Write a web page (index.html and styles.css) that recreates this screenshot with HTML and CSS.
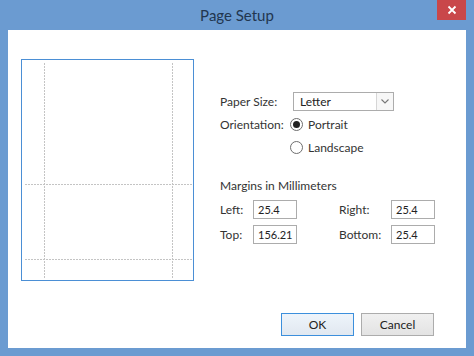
FILE: index.html
```html
<!DOCTYPE html>
<html lang="en">
<head>
    <meta charset="UTF-8">
    <title>Page Setup</title>
    <link rel="stylesheet" href="styles.css">
</head>
<body>
    <div class="window">
        <div class="titlebar">
            <span class="title">Page Setup</span>
            <span class="close-btn">
                <svg width="10" height="10" viewBox="0 0 10 10"><path d="M1.5 1.5 L8.5 8.5 M8.5 1.5 L1.5 8.5" stroke="#fff" stroke-width="1.8"/></svg>
            </span>
        </div>
        <div class="client">
            <div class="main">
                <div class="preview">
                    <svg width="171" height="220" viewBox="0 0 171 220">
                        <g stroke="#c4c4c4" stroke-width="1" stroke-dasharray="2 1">
                            <line x1="22.5" y1="3" x2="22.5" y2="219"/>
                            <line x1="150.5" y1="3" x2="150.5" y2="219"/>
                            <line x1="3" y1="124.5" x2="171" y2="124.5"/>
                            <line x1="3" y1="199.5" x2="171" y2="199.5"/>
                        </g>
                    </svg>
                </div>
                <div class="form">
                    <div class="row">
                        <span class="label">Paper Size:</span>
                        <div class="select">
                            <span class="select-value">Letter</span>
                            <span class="select-arrow">
                                <svg width="8" height="5" viewBox="0 0 8 5"><path d="M0.5 0.5 L4 4 L7.5 0.5" fill="none" stroke="#777" stroke-width="1.1"/></svg>
                            </span>
                        </div>
                    </div>
                    <div class="row orient">
                        <span class="label">Orientation:</span>
                        <span class="radio checked"></span>
                        <span>Portrait</span>
                    </div>
                    <div class="row landscape">
                        <span class="radio"></span>
                        <span>Landscape</span>
                    </div>
                    <div class="group-title">Margins in Millimeters</div>
                    <div class="margins">
                        <span class="label">Left:</span>
                        <span class="field">25.4</span>
                        <span class="label right-label">Right:</span>
                        <span class="field">25.4</span>
                        <span class="label">Top:</span>
                        <span class="field">156.21</span>
                        <span class="label right-label">Bottom:</span>
                        <span class="field">25.4</span>
                    </div>
                </div>
            </div>
            <div class="buttons">
                <span class="btn default">OK</span>
                <span class="btn">Cancel</span>
            </div>
        </div>
    </div>
</body>
</html>
```

FILE: styles.css
```css
body {
    margin: 0;
    background-color: #6b9bd1;
    font-family: Lato, "Noto Sans", sans-serif;
    font-size: 12px;
    color: #333;
}

.window {
    width: 474px;
    height: 356px;
}

.titlebar {
    height: 30px;
    display: flex;
    justify-content: center;
    position: relative;
}

.title {
    font-size: 15px;
    color: #22364f;
    line-height: 30px;
}

.close-btn {
    position: absolute;
    top: 0;
    right: 8px;
    width: 29px;
    height: 20px;
    background-color: #c9474a;
    display: flex;
    align-items: center;
    justify-content: center;
}

.client {
    background-color: #fff;
    margin: 0 8px;
    height: 318px;
    display: flex;
    flex-direction: column;
}

.main {
    display: flex;
    padding: 29px 0 0 13px;
}

.preview {
    width: 171px;
    height: 220px;
    border: 1px solid #4b8fd5;
}

.preview svg {
    display: block;
}

.form {
    margin-left: 26px;
    padding-top: 33px;
}

.row {
    display: flex;
    align-items: center;
    height: 19px;
}

.label {
    width: 73px;
}

.select {
    width: 99px;
    height: 17px;
    border: 1px solid #acacac;
    display: flex;
}

.select-value {
    flex: 1;
    padding-left: 6px;
    line-height: 17px;
    color: #222;
}

.select-arrow {
    width: 16px;
    border-left: 1px solid #d6d6d6;
    background-color: #f7f7f7;
    display: flex;
    align-items: center;
    justify-content: center;
}

.orient {
    margin-top: 4px;
}

.orient .label {
    width: 70px;
}

.landscape {
    margin-top: 4px;
    padding-left: 70px;
}

.radio {
    width: 11px;
    height: 11px;
    border: 1px solid #6e6e6e;
    border-radius: 50%;
    margin-right: 5px;
    display: flex;
    align-items: center;
    justify-content: center;
}

.radio.checked::after {
    content: "";
    width: 7px;
    height: 7px;
    border-radius: 50%;
    background-color: #222;
}

.group-title {
    margin-top: 21px;
    height: 17px;
}

.margins {
    display: grid;
    grid-template-columns: 33px 44px 42px 52px 44px;
    grid-auto-rows: 19px;
    row-gap: 6px;
    margin-top: 5px;
    align-items: center;
}

.margins .label {
    width: auto;
}

.right-label {
    grid-column: 4;
}

.field {
    height: 17px;
    border: 1px solid #acacac;
    padding-left: 4px;
    line-height: 17px;
    font-size: 11px;
    color: #222;
}

.buttons {
    margin-top: auto;
    margin-bottom: 12px;
    padding-right: 32px;
    display: flex;
    justify-content: flex-end;
    gap: 7px;
}

.btn {
    width: 71px;
    height: 21px;
    border: 1px solid #acacac;
    background: linear-gradient(#f0f0f0, #e3e3e3);
    text-align: center;
    line-height: 21px;
    color: #222;
}

.btn.default {
    border-color: #3c8fdc;
    background: linear-gradient(#eef4fb, #e1e8f0);
}
```
